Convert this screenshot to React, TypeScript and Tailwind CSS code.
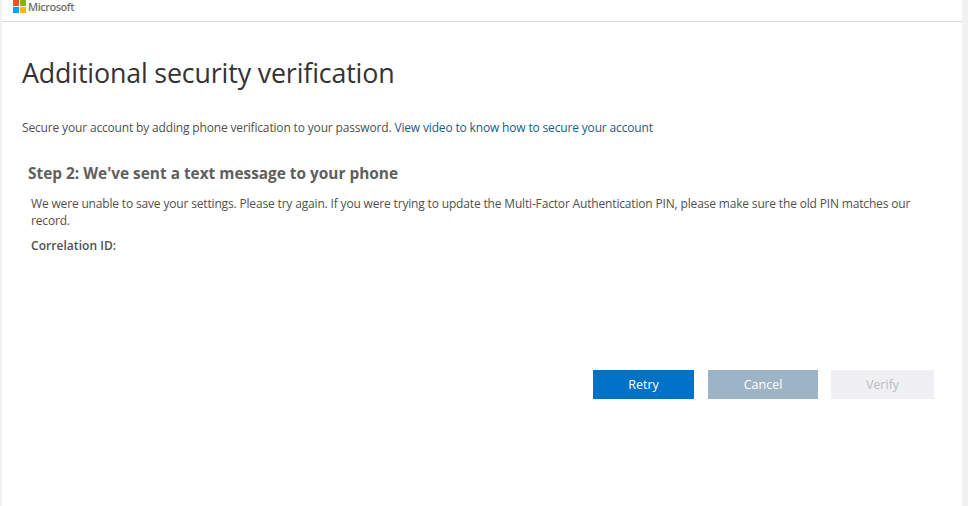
export default function App() {
  return (
    <div className="h-[506px] w-[968px] overflow-hidden bg-white flex font-['Open_Sans','Noto_Sans',sans-serif] text-[#505050]">
      <div className="w-[2px] bg-[#f1f1f1] shrink-0" />
      <div className="flex-1 flex flex-col">
        {/* Header */}
        <div className="h-[22px] border-b border-[#d9d9d9] pl-[11px] flex items-start shrink-0">
          <svg width="13" height="13" viewBox="0 0 13 13">
            <rect x="0" y="0" width="6" height="6" fill="#f25022" />
            <rect x="7" y="0" width="6" height="6" fill="#7fba00" />
            <rect x="0" y="7" width="6" height="6" fill="#00a4ef" />
            <rect x="7" y="7" width="6" height="6" fill="#ffb900" />
          </svg>
          <span className="ml-[2px] text-[11px] leading-[14px] font-semibold text-[#737373] tracking-[-0.5px]">Microsoft</span>
        </div>

        <div className="flex-1 pl-[20px]">
          <h1 className="mt-[31px] text-[26.8px] leading-[40px] font-normal text-[#333] tracking-[-0.15px]">
            Additional security verification
          </h1>
          <p className="mt-[27px] text-[12px] leading-[16px] tracking-[-0.16px]">
            Secure your account by adding phone verification to your password.{' '}
            <a className="text-[#1c5a85]">View video to know how to secure your account</a>
          </p>

          <div className="mt-[28px] pl-[6px]">
            <h2 className="text-[15.4px] leading-[20px] font-bold text-[#5f5f5f]">Step 2: We've sent a text message to your phone</h2>
            <div className="mt-[12px] pl-[3px] w-[890px] text-[12px] leading-[16.5px] tracking-[-0.165px]">
              <p>
                We were unable to save your settings. Please try again. If you were trying to update the Multi-Factor Authentication PIN, please make sure the old PIN matches our record.
              </p>
              <p className="mt-[9px] font-semibold tracking-[0.05px]">Correlation ID:</p>
            </div>
          </div>

          {/* Buttons */}
          <div className="mt-[115px] flex justify-end gap-[13px] pr-[28px]">
            <button className="w-[101px] h-[29px] pt-[2px] mr-[1px] bg-[#0072c6] text-white text-[12.5px]">Retry</button>
            <button className="w-[110px] h-[29px] pt-[2px] bg-[#9db3c6] text-white text-[12.5px]">Cancel</button>
            <button className="w-[103px] h-[29px] pt-[2px] bg-[#f0f0f2] text-[#b8bcc2] text-[12.5px]">Verify</button>
          </div>
        </div>
      </div>
      <div className="w-[6px] bg-[#f1f1f1] shrink-0" />
    </div>
  );
}
